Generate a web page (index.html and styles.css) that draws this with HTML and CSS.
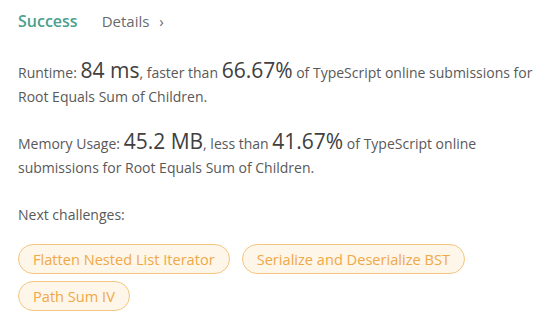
FILE: index.html
```html
<!DOCTYPE html>
<html lang="en">
<head>
    <meta charset="UTF-8">
    <title>Submission Result</title>
    <link rel="stylesheet" href="styles.css">
</head>
<body>
    <div class="result">
        <div class="result-head">
            <span class="status">Success</span>
            <span class="details">Details <span class="chev">›</span></span>
        </div>

        <p class="stat">
            Runtime: <span class="big">84 ms</span>, faster than <span class="big">66.67%</span> of TypeScript online submissions for Root Equals Sum of Children.
        </p>

        <p class="stat">
            Memory Usage: <span class="big">45.2 MB</span>, less than <span class="big">41.67%</span> of TypeScript online submissions for Root Equals Sum of Children.
        </p>

        <p class="next-title">Next challenges:</p>
        <div class="challenges">
            <span class="pill">Flatten Nested List Iterator</span>
            <span class="pill">Serialize and Deserialize BST</span>
            <span class="pill">Path Sum IV</span>
        </div>
    </div>
</body>
</html>
```

FILE: styles.css
```css
body {
    margin: 0;
    background-color: white;
    font-family: "Open Sans", "Noto Sans", sans-serif;
    color: #595959;
}
.result {
    padding: 9px 10px 0 18px;
}
.result-head {
    display: flex;
    align-items: baseline;
    line-height: 24px;
}
.status {
    color: #4a9f8f;
    font-weight: 600;
    font-size: 16px;
}
.details {
    margin-left: 24px;
    font-size: 15px;
    color: #6b6b6b;
}
.chev {
    margin-left: 6px;
}
.stat {
    font-size: 14px;
    line-height: 24px;
    margin: 27px 0 0;
}
.stat + .stat {
    margin-top: 22px;
}
.big {
    font-size: 21px;
    line-height: 1;
    color: #404040;
}
.next-title {
    font-size: 14px;
    margin: 23px 0 0;
    line-height: 24px;
}
.challenges {
    display: flex;
    flex-wrap: wrap;
    gap: 7px 12px;
    margin-top: 17px;
}
.pill {
    font-size: 14.6px;
    line-height: 28px;
    padding: 0 14px;
    border: 1px solid #f3c680;
    border-radius: 15px;
    background-color: #fef6e8;
    color: #f0a848;
}
```
